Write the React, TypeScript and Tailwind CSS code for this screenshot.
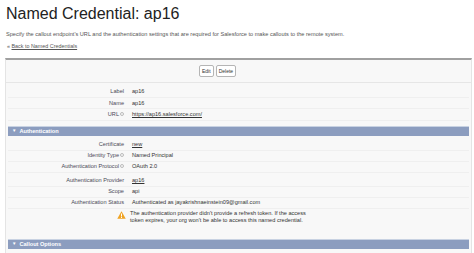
import type { ReactNode } from "react";

const LABEL_W = "w-[116px]";

export default function App() {
  return (
    <div className="h-[253px] w-[474px] overflow-hidden bg-white font-['Liberation_Sans',Arial,sans-serif] text-[#333]">
      <div className="px-[6px] pt-[5px]">
        <h1 className="text-[16px] leading-[18px] text-[#222]">Named Credential: ap16</h1>
        <p className="mt-[8px] text-[5.6px] leading-[7px] text-[#555]">
          Specify the callout endpoint's URL and the authentication settings that are required for Salesforce to
          make callouts to the remote system.
        </p>
        <p className="mt-[5px] pl-[1px] text-[5.4px] leading-[7px] text-[#555]">
          « <span className="underline">Back to Named Credentials</span>
        </p>
      </div>

      <div className="ml-[5px] mr-[2px] mt-[8px] border-x border-b border-t-2 border-x-[#e4e4e4] border-b-[#e4e4e4] border-t-[#a0a0a0] bg-[#f8f8f8]">
        <div className="flex h-[23px] items-center border-b border-[#e6e6e6] pl-[193px]">
          <Btn>Edit</Btn>
          <Btn>Delete</Btn>
        </div>

        <div className="pt-[3px]">
          <Row label="Label">ap16</Row>
          <Row label="Name">ap16</Row>
          <Row label="URL" help>
            <span className="underline">https://ap16.salesforce.com/</span>
          </Row>
        </div>

        <Header className="mt-[5px]">Authentication</Header>

        <div className="pt-[4px]">
          <Row label="Certificate" short>
            <span className="underline">new</span>
          </Row>
          <Row label="Identity Type" help short>Named Principal</Row>
          <Row label="Authentication Protocol" help short>OAuth 2.0</Row>
          <div className="h-[3px]" />
          <Row label="Authentication Provider" short>
            <span className="underline">ap16</span>
          </Row>
          <Row label="Scope" short>api</Row>
          <Row label="Authentication Status" short>Authenticated as jayakrishnaeinstein09@gmail.com</Row>
          <div className="flex pt-[1px] pb-[14px]">
            <div className="flex w-[124px] justify-end pr-[4px] pt-[1px]">
              <svg width="9" height="8" viewBox="0 0 18 16">
                <path d="M9 0.5 L17.5 15.5 L0.5 15.5 Z" fill="#f0a323" />
                <rect x="8" y="5" width="2" height="6" fill="#fff" />
                <rect x="8" y="12" width="2" height="2" fill="#fff" />
              </svg>
            </div>
            <p className="text-[5.6px] leading-[7.5px] text-[#333]">
              The authentication provider didn't provide a refresh token. If the access
              <br />
              token expires, your org won't be able to access this named credential.
            </p>
          </div>
        </div>

        <Header>Callout Options</Header>
        <div className="h-[10px]" />
      </div>
    </div>
  );
}

function Btn({ children }: { children: ReactNode }) {
  return (
    <span className="mr-[2px] rounded-[2px] border border-[#b5b5b5] bg-white px-[2px] text-[5px] leading-[10px] text-[#333]">
      {children}
    </span>
  );
}

function Header({ children, className = "" }: { children: ReactNode; className?: string }) {
  return (
    <div
      className={`mx-[2px] flex h-[10px] items-center gap-[3px] border-t border-[#c8d2e2] bg-[#8c9dbf] pl-[4px] text-[5.6px] font-bold text-white ${className}`}
    >
      <span className="text-[4.5px]">▼</span>
      {children}
    </div>
  );
}

function Row({
  label,
  help,
  short,
  children,
}: {
  label: string;
  help?: boolean;
  short?: boolean;
  children: ReactNode;
}) {
  return (
    <div
      className={`mx-[2px] flex items-center border-b border-[#efefef] text-[5.6px] ${short ? "h-[11px]" : "h-[11.5px]"}`}
    >
      <div className={`${LABEL_W} flex shrink-0 items-center justify-end text-right text-[#4a4a56]`}>
        {label}
        {help && <span className="ml-[1px] inline-block h-[4px] w-[4px] rounded-full border-[0.5px] border-[#bbb]" />}
      </div>
      <div className="pl-[8px] text-[#333]">{children}</div>
    </div>
  );
}
